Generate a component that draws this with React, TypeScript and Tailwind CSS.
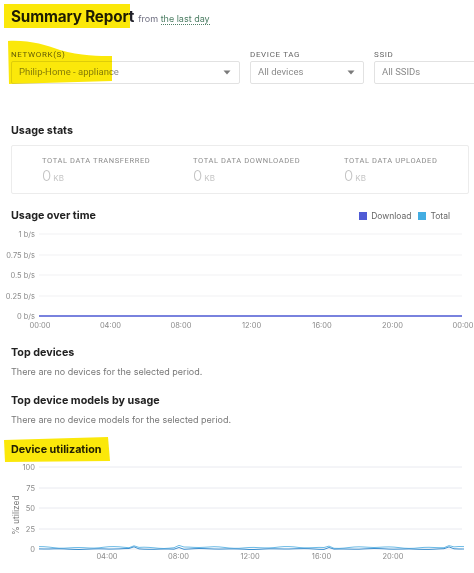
import React from 'react'

const ticks = ['00:00', '04:00', '08:00', '12:00', '16:00', '20:00', '00:00']

function Caret() {
  return (
    <svg width="8" height="5" viewBox="0 0 8 5" className="shrink-0">
      <path d="M0.5 0.5 L7.5 0.5 L4 4.5 Z" fill="#7a7a7a" />
    </svg>
  )
}

function Select({ value, caret = true }: { value: string; caret?: boolean }) {
  return (
    <div className="h-[23px] border border-[#e2e2e2] rounded-[2px] bg-white flex items-center justify-between pl-[7px] pr-[8px]">
      <span className="font-['Roboto',sans-serif] text-[9.5px] text-[#8a8a8a] whitespace-nowrap">{value}</span>
      {caret && <Caret />}
    </div>
  )
}

function Stat({ label }: { label: string }) {
  return (
    <div className="flex flex-col">
      <span className="font-['Roboto',sans-serif] text-[7.5px] tracking-[0.08em] text-[#8c8c8c] leading-[12px]">{label}</span>
      <span className="flex items-baseline gap-[2px] text-[#c4c4c4] leading-[18px]">
        <span className="text-[15px] font-light">0</span>
        <span className="text-[8px]">KB</span>
      </span>
    </div>
  )
}

function UsageChart() {
  const rows = [
    { y: 7, label: '1 b/s' },
    { y: 28, label: '0.75 b/s' },
    { y: 48, label: '0.5 b/s' },
    { y: 69, label: '0.25 b/s' },
    { y: 89, label: '0 b/s' },
  ]
  return (
    <svg width="474" height="108" className="block">
      {rows.map((r) => (
        <g key={r.label}>
          <line x1="39" x2="462" y1={r.y} y2={r.y} stroke="#f1f1f3" strokeWidth="1" />
          <text x="35" y={r.y + 3} textAnchor="end" fontSize="7.5" fill="#8a8a8a" fontFamily="Inter, sans-serif">
            {r.label}
          </text>
        </g>
      ))}
      <line x1="39" x2="462" y1="89" y2="89" stroke="#4f5bd5" strokeWidth="1.5" />
      {ticks.map((t, i) => (
        <text key={i} x={40 + i * 70.5} y="101" textAnchor="middle" fontSize="7.5" fill="#8a8a8a" fontFamily="Inter, sans-serif">
          {t}
        </text>
      ))}
    </svg>
  )
}

function wave(seed: number, base: number, amp: number) {
  const pts: string[] = []
  for (let i = 0; i <= 85; i++) {
    const x = 39 + i * 5
    const n = Math.sin(i * 0.9 + seed) * 0.5 + Math.sin(i * 0.37 + seed * 2) * 0.5
    const spike = i === 19 || i === 58 || i === 28 || i === 82 ? 1.8 : 0
    pts.push(`${x},${(base - (n + 1) * amp - spike).toFixed(1)}`)
  }
  return pts.join(' ')
}

function UtilChart() {
  const rows = [
    { y: 5, label: '100' },
    { y: 26, label: '75' },
    { y: 46, label: '50' },
    { y: 67, label: '25' },
    { y: 87, label: '0' },
  ]
  return (
    <svg width="474" height="107" className="block">
      {rows.map((r) => (
        <g key={r.label}>
          <line x1="39" x2="462" y1={r.y} y2={r.y} stroke="#e9eaf0" strokeWidth="1" />
          <text x="35" y={r.y + 3} textAnchor="end" fontSize="7.5" fill="#8a8a8a" fontFamily="Inter, sans-serif">
            {r.label}
          </text>
        </g>
      ))}
      <text
        x="0"
        y="0"
        transform="translate(19 53) rotate(-90)"
        textAnchor="middle"
        fontSize="8.5"
        fill="#7a7a7a"
        fontFamily="Inter, sans-serif"
      >
        % utilized
      </text>
      <polyline points={wave(1, 86.5, 1)} fill="none" stroke="#6cbbe6" strokeWidth="1" />
      <polyline points={wave(4, 87.5, 0.5)} fill="none" stroke="#3b8fcf" strokeWidth="1" />
      {ticks.slice(1, 6).map((t, i) => (
        <text key={i} x={107 + i * 71.5} y="97" textAnchor="middle" fontSize="7.5" fill="#8a8a8a" fontFamily="Inter, sans-serif">
          {t}
        </text>
      ))}
    </svg>
  )
}

export default function App() {
  return (
    <div className="relative w-[474px] h-[573px] overflow-hidden bg-white font-['Inter',sans-serif] text-[#222]">
      {/* marker highlights from the annotated screenshot */}
      <svg width="474" height="573" className="absolute inset-0 pointer-events-none mix-blend-multiply z-10">
        <rect x="4" y="4" width="126" height="24" fill="#fbe80a" />
        <path d="M8 41 C30 40 45 45 60 50 C80 56 100 56 112 56 L112 81 L9 84 Z" fill="#fbe80a" />
        <path d="M4 440 L108 437 L110 461 L5 462 Z" fill="#fbe80a" />
      </svg>

      <div className="flex items-baseline gap-[4px] pl-[11px] pt-[5px] h-[29px]">
        <h1 className="text-[15.25px] font-bold leading-[24px] tracking-[-0.01em] text-[#1e1e28]">Summary Report</h1>
        <span className="text-[9px] text-[#6e6e80]">
          from{' '}
          <span className="text-[#4d7e64] border-b border-dotted border-[#4d7e64]">the last day</span>
        </span>
      </div>

      <div className="flex gap-[10px] pl-[11px] mt-[20px]">
        <div className="w-[229px] shrink-0 flex flex-col">
          <span className="font-['Roboto',sans-serif] text-[8px] tracking-[0.08em] text-[#666] leading-[12px]">NETWORK(S)</span>
          <Select value="Philip-Home - appliance" />
        </div>
        <div className="w-[114px] shrink-0 flex flex-col">
          <span className="font-['Roboto',sans-serif] text-[8px] tracking-[0.08em] text-[#666] leading-[12px]">DEVICE TAG</span>
          <Select value="All devices" />
        </div>
        <div className="w-[110px] shrink-0 flex flex-col">
          <span className="font-['Roboto',sans-serif] text-[8px] tracking-[0.08em] text-[#666] leading-[12px]">SSID</span>
          <Select value="All SSIDs" caret={false} />
        </div>
      </div>

      <h2 className="pl-[11px] mt-[38px] text-[10.75px] font-bold leading-[18px]">Usage stats</h2>
      <div className="ml-[11px] mt-[5px] w-[458px] h-[49px] border border-[#ececec] rounded-[2px] grid grid-cols-[151px_151px_151px] pl-[30px] pt-[9px]">
        <Stat label="TOTAL DATA TRANSFERRED" />
        <Stat label="TOTAL DATA DOWNLOADED" />
        <Stat label="TOTAL DATA UPLOADED" />
      </div>

      <div className="flex items-center justify-between pl-[11px] pr-[24px] mt-[13px] h-[18px]">
        <h2 className="text-[10.75px] font-bold leading-[18px]">Usage over time</h2>
        <div className="flex items-center gap-[7px] text-[8.5px] text-[#666]">
          <span className="flex items-center gap-[4px]">
            <span className="w-[8px] h-[8px] bg-[#4f5bd5]" />
            Download
          </span>
          <span className="flex items-center gap-[4px]">
            <span className="w-[8px] h-[8px] bg-[#43ade2]" />
            Total
          </span>
        </div>
      </div>
      <div className="mt-[2px]">
        <UsageChart />
      </div>

      <h2 className="pl-[11px] mt-[10px] text-[10.75px] font-bold leading-[16px]">Top devices</h2>
      <p className="pl-[11px] mt-[4px] text-[9px] text-[#777] leading-[14px]">There are no devices for the selected period.</p>
      <h2 className="pl-[11px] mt-[14px] text-[10.75px] font-bold leading-[16px]">Top device models by usage</h2>
      <p className="pl-[11px] mt-[4px] text-[9px] text-[#777] leading-[14px]">There are no device models for the selected period.</p>

      <h2 className="pl-[11px] mt-[15px] text-[10.75px] font-bold leading-[16px]">Device utilization</h2>
      <div className="mt-[4px]">
        <UtilChart />
      </div>
    </div>
  )
}
